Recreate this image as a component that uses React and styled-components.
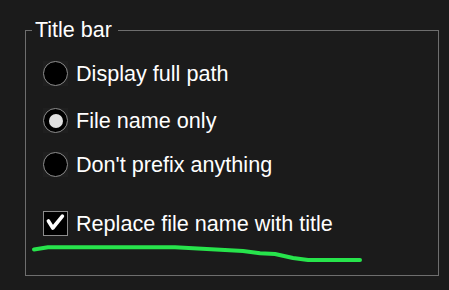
import React from "react";
import styled, { createGlobalStyle } from "styled-components";

const Global = createGlobalStyle`
  html, body {
    margin: 0;
    padding: 0;
    background: #1b1b1b;
  }
  body {
    width: 449px;
    height: 290px;
    overflow: hidden;
    font-family: "Liberation Sans", Arial, sans-serif;
    color: #ffffff;
  }
`;

const Page = styled.div`
  position: relative;
  width: 449px;
  height: 290px;
  padding: 18px 0 0 25px;
  box-sizing: border-box;
`;

const Group = styled.fieldset`
  margin: 0;
  padding: 0;
  width: 414px;
  box-sizing: border-box;
  border: 1px solid #6e6e6e;
  min-inline-size: 0;
`;

const Legend = styled.legend`
  margin-left: 6px;
  padding: 0 6px 0 3px;
  font-size: 21.5px;
  line-height: 25px;
  color: #ffffff;
`;

const Options = styled.div`
  display: flex;
  flex-direction: column;
  padding: 18px 0 39px 17px;
`;

const Row = styled.label`
  display: flex;
  align-items: center;
  gap: 8px;
  height: 25px;
  margin-top: ${(p) => p.$space || 0}px;
  font-size: 21.6px;
  line-height: 24px;
  color: #ffffff;
  cursor: default;
`;

const RadioCell = styled.span`
  width: 25px;
  height: 25px;
  flex: none;
  display: flex;
  align-items: center;
  justify-content: center;
  background: #1f1f1f;
`;

const RadioCircle = styled.span`
  width: 25px;
  height: 25px;
  box-sizing: border-box;
  border-radius: 50%;
  border: 1px solid #8c8c8c;
  background: #000000;
  display: flex;
  align-items: center;
  justify-content: center;
`;

const RadioDot = styled.span`
  width: 14px;
  height: 14px;
  border-radius: 50%;
  background: #e0e0e0;
`;

const CheckBox = styled.span`
  width: 25px;
  height: 25px;
  flex: none;
  box-sizing: border-box;
  border: 1px solid #8c8c8c;
  background: #000000;
  display: flex;
  align-items: center;
  justify-content: center;
`;

const Scribble = styled.svg`
  position: absolute;
  left: 0;
  top: 0;
  pointer-events: none;
`;

function Radio({ checked }) {
  return (
    <RadioCell>
      <RadioCircle>{checked && <RadioDot />}</RadioCircle>
    </RadioCell>
  );
}

function Check() {
  return (
    <CheckBox>
      <svg width="23" height="23" viewBox="0 0 23 23">
        <path
          d="M4.4 9 L8.8 16 L18.4 4.2"
          fill="none"
          stroke="#ffffff"
          strokeWidth="3.6"
          strokeLinecap="round"
          strokeLinejoin="round"
        />
      </svg>
    </CheckBox>
  );
}

export default function App() {
  return (
    <>
      <Global />
      <Page>
        <Group>
          <Legend>Title bar</Legend>
          <Options>
            <Row>
              <Radio />
              <span>Display full path</span>
            </Row>
            <Row $space={22}>
              <Radio checked />
              <span>File name only</span>
            </Row>
            <Row $space={19}>
              <Radio />
              <span>Don't prefix anything</span>
            </Row>
            <Row $space={34}>
              <Check />
              <span>Replace file name with title</span>
            </Row>
          </Options>
        </Group>
        <Scribble width="449" height="290" viewBox="0 0 449 290">
          <path
            d="M34 249.5 L48 247.2 L175 247.2 L243 251 L260 253.3 L275 254 L293 258 L308 260 L360 260"
            fill="none"
            stroke="#27e44c"
            strokeWidth="4"
            strokeLinecap="round"
            strokeLinejoin="round"
          />
        </Scribble>
      </Page>
    </>
  );
}
